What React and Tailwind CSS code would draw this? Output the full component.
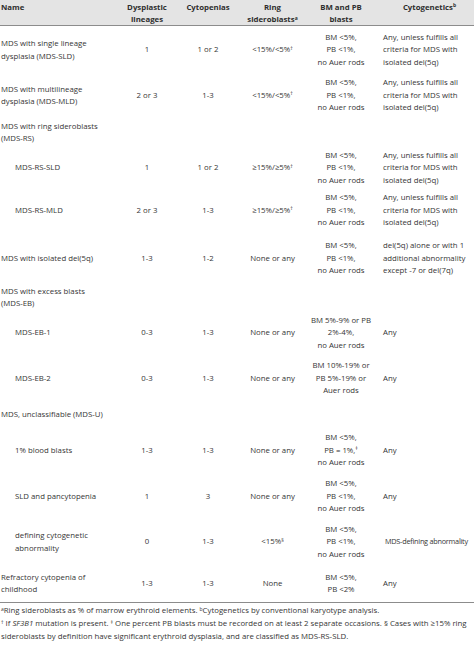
import React from "react";

const bm = ["BM <5%,", "PB <1%,", "no Auer rods"];
const cgAny = ["Any, unless fulfills all", "criteria for MDS with", "isolated del(5q)"];

const Dag = ({ c }) => <span className="relative -top-[2.5px] text-[5px] leading-none">{c}</span>;

const rows = [
  { h: "h-[47px]", name: ["MDS with single lineage", "dysplasia (MDS-SLD)"], dl: "1", cy: "1 or 2", rs: <>&lt;15%/&lt;5%<Dag c="†" /></>, bm, cg: cgAny },
  { h: "h-[44px]", name: ["MDS with multilineage", "dysplasia (MDS-MLD)"], dl: "2 or 3", cy: "1-3", rs: <>&lt;15%/&lt;5%<Dag c="†" /></>, bm, cg: cgAny },
  { h: "h-[30px]", name: ["MDS with ring sideroblasts", "(MDS-RS)"] },
  { h: "h-[41px]", sub: true, name: ["MDS-RS-SLD"], dl: "1", cy: "1 or 2", rs: <>≥15%/≥5%<Dag c="†" /></>, bm, cg: cgAny },
  { h: "h-[44px]", sub: true, name: ["MDS-RS-MLD"], dl: "2 or 3", cy: "1-3", rs: <>≥15%/≥5%<Dag c="†" /></>, bm, cg: cgAny },
  { h: "h-[52px]", name: ["MDS with isolated del(5q)"], dl: "1-3", cy: "1-2", rs: "None or any", bm, cg: ["del(5q) alone or with 1", "additional abnormality", "except -7 or del(7q)"] },
  { h: "h-[26px]", name: ["MDS with excess blasts", "(MDS-EB)"] },
  { h: "h-[45px]", sub: true, name: ["MDS-EB-1"], dl: "0-3", cy: "1-3", rs: "None or any", bm: ["BM 5%-9% or PB", "2%-4%,", "no Auer rods"], cg: ["Any"] },
  { h: "h-[46px]", sub: true, name: ["MDS-EB-2"], dl: "0-3", cy: "1-3", rs: "None or any", bm: ["BM 10%-19% or", "PB 5%-19% or", "Auer rods"], cg: ["Any"] },
  { h: "h-[26px]", name: ["MDS, unclassifiable (MDS-U)"] },
  { h: "h-[46px]", sub: true, name: ["1% blood blasts"], dl: "1-3", cy: "1-3", rs: "None or any", bm: ["BM <5%,", <>PB = 1%,<Dag c="‡" /></>, "no Auer rods"], cg: ["Any"] },
  { h: "h-[46px]", sub: true, name: ["SLD and pancytopenia"], dl: "1", cy: "3", rs: "None or any", bm, cg: ["Any"] },
  { h: "h-[45px]", sub: true, name: ["defining cytogenetic", "abnormality"], dl: "0", cy: "1-3", rs: <>&lt;15%<Dag c="§" /></>, bm, cg: ["MDS-defining abnormality"], cgPad: true },
  { h: "h-[38px]", name: ["Refractory cytopenia of", "childhood"], dl: "1-3", cy: "1-3", rs: "None", bm: ["BM <5%,", "PB <2%"], cg: ["Any"] },
];

function Lines({ items }) {
  return items.map((t, i) => (
    <div key={i} className="whitespace-nowrap">
      {t}
    </div>
  ));
}

export default function App() {
  return (
    <div className="w-[474px] h-[647px] overflow-hidden bg-white text-[#353535] font-['Open_Sans','Noto_Sans',sans-serif] text-[7.8px] leading-[12.5px]">
      <div className="grid grid-cols-[118px_58px_64px_65px_72px_1fr] h-[26px] bg-[#e4e4e4] border-b-[1.5px] border-[#8c8c8c] font-bold text-[#2e2e2e]">
        <div className="pl-[1px] pt-[0.5px]">Name</div>
        <div className="text-center pt-[0.5px]">
          Dysplastic
          <br />
          lineages
        </div>
        <div className="text-center pt-[0.5px]">Cytopenias</div>
        <div className="text-center pt-[0.5px]">
          Ring
          <br />
          sideroblasts<Dag c="a" />
        </div>
        <div className="text-center pt-[0.5px]">
          BM and PB
          <br />
          blasts
        </div>
        <div className="text-center pl-[8px] pt-[0.5px] whitespace-nowrap">
          Cytogenetics<Dag c="b" />
        </div>
      </div>

      {rows.map((r, i) => (
        <div key={i} className={`grid grid-cols-[118px_58px_64px_65px_72px_1fr] items-center ${r.h}`}>
          <div className={r.sub ? "pl-[15px]" : "pl-[1px]"}>
            <Lines items={r.name} />
          </div>
          <div className="text-center">{r.dl}</div>
          <div className="text-center">{r.cy}</div>
          <div className="text-center">{r.rs}</div>
          <div className="text-center">{r.bm && <Lines items={r.bm} />}</div>
          <div className={r.cgPad ? "pl-[8px] text-[7.3px] tracking-[-0.25px]" : "pl-[6px]"}>{r.cg && <Lines items={r.cg} />}</div>
        </div>
      ))}

      <div className="border-t-[1.5px] border-[#8c8c8c] pt-[1px] pl-[1px] leading-[13px] whitespace-nowrap">
        <div>
          <Dag c="a" />Ring sideroblasts as % of marrow erythroid elements. <Dag c="b" />Cytogenetics by conventional karyotype analysis.
        </div>
        <div>
          <Dag c="†" /> If <i>SF3B1</i> mutation is present. <Dag c="‡" /> One percent PB blasts must be recorded on at least 2 separate occasions. § Cases with ≥15% ring
        </div>
        <div>sideroblasts by definition have significant erythroid dysplasia, and are classified as MDS-RS-SLD.</div>
      </div>
    </div>
  );
}
